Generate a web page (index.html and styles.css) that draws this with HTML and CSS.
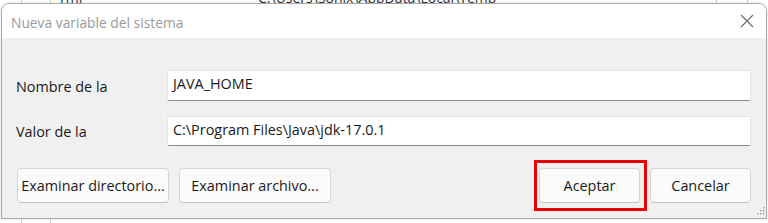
FILE: index.html
```html
<!DOCTYPE html>
<html lang="es">
<head>
<meta charset="utf-8">
<title>Nueva variable del sistema</title>
<link rel="stylesheet" href="styles.css">
</head>
<body>
<div class="backdrop">
  <div class="grid-row">
    <span class="cell c1"></span>
    <span class="cell c2"></span>
    <span class="cell c3">Tmr</span>
    <span class="cell c4">C:\Users\Sonix\AppData\Local\Temp</span>
    <span class="cell c5"></span>
    <span class="cell c6"></span>
  </div>
  <div class="grid-fill">
    <span class="vline l1"></span>
    <span class="vline l2"></span>
  </div>
</div>

<div class="dialog">
  <div class="titlebar">
    <span class="title">Nueva variable del sistema</span>
    <svg class="close" width="14" height="14" viewBox="0 0 14 14" aria-hidden="true">
      <path d="M1 1 L13 13 M13 1 L1 13" stroke="#6b6b6b" stroke-width="1.1" fill="none"/>
    </svg>
  </div>
  <div class="body">
    <div class="field">
      <label class="label">Nombre de la</label>
      <div class="input">JAVA_HOME</div>
    </div>
    <div class="field">
      <label class="label">Valor de la</label>
      <div class="input">C:\Program Files\Java\jdk-17.0.1</div>
    </div>
    <div class="actions">
      <div class="group">
        <button class="btn btn-wide">Examinar directorio...</button>
        <button class="btn btn-wide">Examinar archivo...</button>
      </div>
      <div class="group">
        <button class="btn btn-std highlighted">Aceptar</button>
        <button class="btn btn-std">Cancelar</button>
      </div>
    </div>
    <svg class="grip" width="10" height="10" viewBox="0 0 10 10" aria-hidden="true">
      <rect x="8" y="0" width="1.4" height="1.4" fill="#9a9a9a"/>
      <rect x="5" y="3" width="1.4" height="1.4" fill="#9a9a9a"/>
      <rect x="8" y="3" width="1.4" height="1.4" fill="#9a9a9a"/>
      <rect x="2" y="6" width="1.4" height="1.4" fill="#9a9a9a"/>
      <rect x="5" y="6" width="1.4" height="1.4" fill="#9a9a9a"/>
      <rect x="8" y="6" width="1.4" height="1.4" fill="#9a9a9a"/>
    </svg>
  </div>
</div>
</body>
</html>
```

FILE: styles.css
```css
* { box-sizing: border-box; }

html, body {
  margin: 0;
  padding: 0;
  width: 768px;
  height: 223px;
  overflow: hidden;
  background: #ffffff;
  font-family: "Open Sans", "Noto Sans", sans-serif;
}

body { position: relative; }

.backdrop {
  display: flex;
  flex-direction: column;
  height: 223px;
}

.grid-row {
  display: flex;
  height: 4px;
  overflow: hidden;
  font-size: 14px;
  color: #333;
}

.cell {
  display: block;
  line-height: 18px;
  margin-top: -11px;
  border-right: 1px solid #c8c8c8;
  white-space: nowrap;
  overflow: hidden;
  height: 22px;
}

.c1 { width: 22px; }
.c2 { width: 29px; }
.c3 { width: 207px; padding-left: 7px; border-right: none; }
.c4 { width: 459px; border-right: 1px solid #c8c8c8; }
.c5 { width: 31px; }
.c6 { flex: 1; border-right: none; }

.grid-fill {
  flex: 1;
  display: flex;
}

.vline {
  display: block;
  height: 100%;
  border-right: 1px solid #c8c8c8;
}
.l1 { width: 22px; }
.l2 { width: 29px; }

.dialog {
  position: absolute;
  left: 1px;
  top: 3px;
  width: 766px;
  height: 216px;
  border: 1px solid #a9a9a9;
  border-radius: 8px 8px 0 0;
  overflow: hidden;
  display: flex;
  flex-direction: column;
  background: #f0f0f0;
  box-shadow: 0 0 3px rgba(0,0,0,0.12);
}

.titlebar {
  height: 34px;
  flex: none;
  background: #ffffff;
  display: flex;
  align-items: center;
  justify-content: space-between;
  padding: 0 12px 0 9px;
}

.title {
  font-size: 13.8px;
  color: #9b9b9b;
  margin-top: 2px;
}

.close { display: block; margin-top: 0px; }

.body {
  flex: 1;
  position: relative;
  padding: 32px 15px 0 14px;
  display: flex;
  flex-direction: column;
}

.field {
  display: flex;
  align-items: center;
  height: 31px;
  margin-bottom: 15px;
}

.label {
  width: 151px;
  flex: none;
  font-size: 14.4px;
  color: #1a1a1a;
  padding-top: 1px;
}

.input {
  flex: 1;
  height: 31px;
  background: #ffffff;
  border: 1px solid #e3e3e3;
  border-bottom: 1px solid #8a8a8a;
  border-radius: 2px;
  font-size: 14.4px;
  color: #1a1a1a;
  padding: 3px 0 0 5px;
  line-height: 20px;
  white-space: nowrap;
}

.field + .field { height: 30px; }
.field + .field .input { height: 30px; }

.actions {
  display: flex;
  justify-content: space-between;
  margin-top: 7px;
}

.group {
  display: flex;
  gap: 10px;
}

.btn {
  position: relative;
  height: 35px;
  background: #fbfbfb;
  border: 1px solid #d6d6d6;
  border-bottom-color: #c2c2c2;
  border-radius: 4px;
  font-family: inherit;
  font-size: 14.4px;
  color: #1a1a1a;
  padding: 0;
  margin: 0;
}

.btn-wide { width: 152px; }
.btn-std { width: 101px; }

.group:first-child { margin-left: 1px; }

.highlighted::after {
  content: "";
  position: absolute;
  left: -6px;
  right: -8px;
  top: -9px;
  bottom: -9px;
  border: 3px solid #ee0000;
}

.grip {
  position: absolute;
  right: 1px;
  bottom: 1px;
}
```
